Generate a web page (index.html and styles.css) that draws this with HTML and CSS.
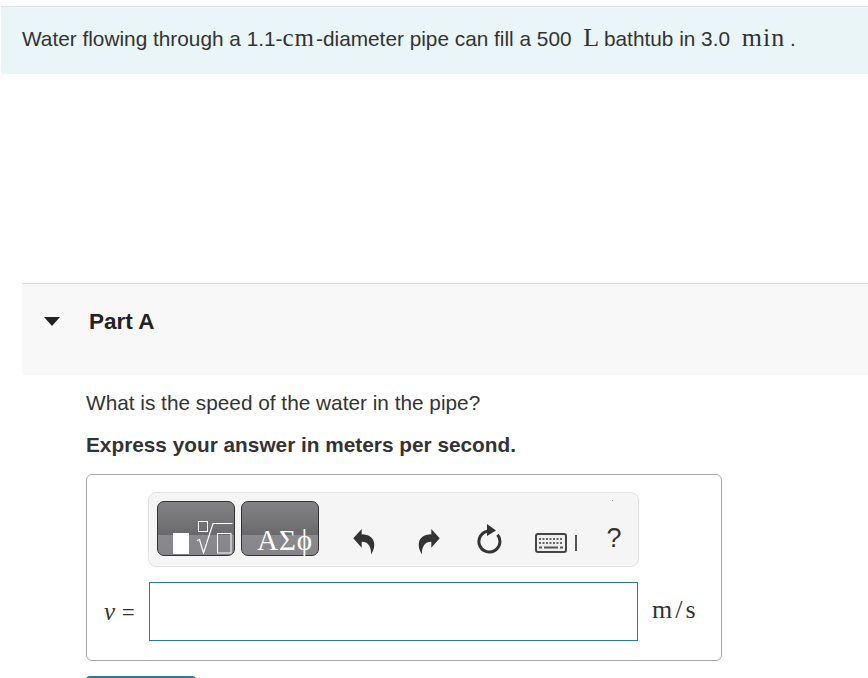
FILE: index.html
```html
<!DOCTYPE html>
<html lang="en">
<head>
  <meta charset="UTF-8" />
  <title>Part A</title>
  <link rel="stylesheet" href="styles.css">
</head>
<body>
  <div class="intro">
    <p>Water flowing through a 1.1-<span class="unit">cm</span>-diameter pipe can fill a 500 <span class="unit liter">L</span> bathtub in 3.0 <span class="unit minute">min</span> .</p>
  </div>

  <div class="part-head">
    <span class="caret"></span>
    <h2>Part A</h2>
  </div>

  <div class="part-body">
    <p class="question">What is the speed of the water in the pipe?</p>
    <p class="instruction">Express your answer in meters per second.</p>

    <div class="answer-box">
      <div class="toolbar">
        <button class="tool-btn templates" type="button">
          <span class="white-block"></span>
          <svg width="38" height="34" viewBox="0 0 38 34" fill="none" stroke="#fff">
            <rect x="3.500" y="1.500" width="9" height="10" stroke-width="1"/>
            <path d="M2 20.500l2.500-1 4 13.500 9.500-29.500H37.500" stroke-width="1.200"/>
            <rect x="22.500" y="13.500" width="13.500" height="19.500" stroke-width="1"/>
          </svg>
        </button>
        <button class="tool-btn greek" type="button">ΑΣϕ</button>
        <svg class="icon undo" width="24" height="30" viewBox="0 0 24 30">
          <path d="M1.300 13.300L9.700 4V9.300C17 9.300 22.300 13 22.300 20C22.300 24 20.500 27 19 29.500C19.500 23 17 16.700 9.700 16.700V22.700Z" fill="#333"/>
        </svg>
        <svg class="icon redo" width="24" height="30" viewBox="0 0 24 30">
          <path d="M22.700 13.300L14.300 4V9.300C7 9.300 1.700 13 1.700 20C1.700 24 3.500 27 5 29.500C4.500 23 7 16.700 14.300 16.700V22.700Z" fill="#333"/>
        </svg>
        <svg class="icon reset" width="28" height="30" viewBox="0 0 28 30">
          <path d="M21.500 10.800A10.500 10.500 0 1 1 11.500 7.200" fill="none" stroke="#333" stroke-width="3"/>
          <path d="M11 0l9 6.500-9 5.500z" fill="#333"/>
        </svg>
        <svg class="icon keyboard" width="32" height="20" viewBox="0 0 32 20">
          <rect x="1" y="1" width="30" height="18" rx="2" fill="#efefef" stroke="#444" stroke-width="2"/>
          <path d="M4 6h24M4 10h24" stroke="#666" stroke-width="2" stroke-dasharray="2 1.500"/>
          <path d="M4 14.500h3M9 14.500h14M25 14.500h3" stroke="#555" stroke-width="2"/>
        </svg>
        <span class="divider"></span>
        <span class="help">?</span>
        <span class="speck"></span>
      </div>
      <div class="input-row">
        <span class="var"><i>v</i> =</span>
        <input class="answer-input" type="text">
        <span class="answer-unit">m/s</span>
      </div>
    </div>

    <button class="submit" type="button"></button>
  </div>
</body>
</html>
```

FILE: styles.css
```css
html, body {
  height: 678px;
  overflow: hidden;
}
body {
  margin: 0;
  padding-top: 6px;
  font-family: 'Liberation Sans', Arial, sans-serif;
  font-size: 20.800px;
  color: #333;
  background: #fff;
}
p {
  margin: 0;
}
.intro {
  margin-left: 1px;
  height: 68px;
  box-sizing: border-box;
  padding: 18px 0 0 21px;
  line-height: 26px;
  background: #e9f5f7;
  border-top: 1px solid #e0e4e8;
}
.unit {
  margin-right: 1px;
  font-family: 'Liberation Serif', serif;
  font-size: 25px;
  letter-spacing: 1px;
}
.unit.liter {
  font-size: 26px;
  margin: 0 -2px 0 6px;
}
.unit.minute {
  font-size: 26px;
  margin: 0 -1px 0 6px;
}
.part-head {
  display: flex;
  align-items: center;
  margin: 209px 0 0 22px;
  height: 92px;
  box-sizing: border-box;
  padding: 0 0 16px 22px;
  background: #f8f8f8;
  border-top: 1px solid #dedede;
}
.caret {
  width: 0;
  height: 0;
  border-left: 8.500px solid transparent;
  border-right: 8.500px solid transparent;
  border-top: 9px solid #222;
}
.part-head h2 {
  margin: 0 0 0 29px;
  font-size: 22.500px;
  font-weight: bold;
  color: #222;
}
.part-body {
  padding: 15px 0 0 86px;
}
.question {
  line-height: 26px;
}
.instruction {
  margin-top: 16px;
  line-height: 26px;
  font-weight: bold;
}
.answer-box {
  width: 636px;
  height: 187px;
  box-sizing: border-box;
  margin-top: 16px;
  padding: 17px 0 0 61px;
  border: 1px solid #aaa;
  border-radius: 6px;
}
.toolbar {
  position: relative;
  display: flex;
  align-items: flex-start;
  width: 491px;
  height: 75px;
  box-sizing: border-box;
  padding: 8px 0 0 8px;
  background: #f5f5f5;
  border: 1px solid #e2e2e2;
  border-radius: 8px;
}
.tool-btn {
  position: relative;
  width: 78px;
  height: 55px;
  margin-right: 6px;
  padding: 0;
  border: 1px solid #333;
  border-radius: 7px;
  color: #fff;
  background: linear-gradient(#838386 0, #6a6a6c 62%, #8b8b8f 62%, #858589 100%);
}
.white-block {
  position: absolute;
  left: 15px;
  bottom: 1px;
  width: 16px;
  height: 21px;
  background: #fff;
}
.templates svg {
  position: absolute;
  right: 1px;
  bottom: 1px;
}
.greek {
  padding: 22px 0 0 10px;
  font-family: 'Liberation Serif', serif;
  font-size: 29px;
  letter-spacing: 1px;
}
.icon {
  flex: none;
}
.undo {
  margin: 24px 0 0 27px;
}
.redo {
  margin: 24px 0 0 41px;
}
.reset {
  margin: 23px 0 0 35px;
}
.keyboard {
  margin: 32px 0 0 31px;
}
.divider {
  width: 1.500px;
  height: 16px;
  margin: 34px 0 0 8px;
  background: #555;
}
.help {
  margin: 22px 0 0 30px;
  font-size: 27px;
  line-height: 30px;
}
.speck {
  position: absolute;
  top: 7px;
  right: 25px;
  width: 1px;
  height: 1px;
  background: #999;
}
.input-row {
  display: flex;
  align-items: center;
  margin: 15px 0 0 -44px;
}
.var {
  flex: none;
  width: 45px;
  font-family: 'Liberation Serif', serif;
  font-size: 23px;
}
.var i {
  font-size: 25px;
  margin-right: 1px;
}
.answer-input {
  flex: none;
  width: 489px;
  height: 59px;
  box-sizing: border-box;
  border: 1px solid #2a7a9c;
  background: #fff;
}
.answer-unit {
  margin: -3px 0 0 14px;
  font-family: 'Liberation Serif', serif;
  font-size: 26px;
  letter-spacing: 3px;
}
.submit {
  display: block;
  width: 110px;
  height: 30px;
  margin-top: 15px;
  padding: 0;
  border: none;
  border-radius: 4px;
  background: #2a7a9c;
}
```
